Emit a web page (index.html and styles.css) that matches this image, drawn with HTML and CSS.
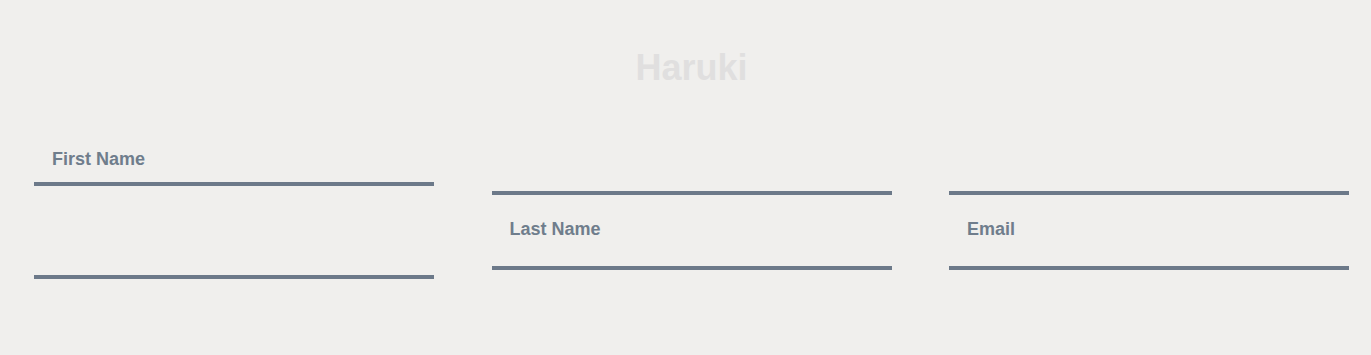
FILE: index.html
```html
<!DOCTYPE html>
<html lang="en">
<head>
<meta charset="utf-8">
<title>Haruki</title>
<link rel="stylesheet" href="styles.css">
</head>
<body>
<main class="page">
  <h1 class="title">Haruki</h1>
  <form class="fields">
    <div class="field field-above">
      <label class="label" for="first">First Name</label>
      <div class="box box-tall" id="first"></div>
    </div>
    <div class="field field-inside">
      <div class="box box-inner">
        <label class="label">Last Name</label>
      </div>
    </div>
    <div class="field field-inside">
      <div class="box box-inner">
        <label class="label">Email</label>
      </div>
    </div>
  </form>
</main>
</body>
</html>
```

FILE: styles.css
```css
html, body {
  margin: 0;
  padding: 0;
  background: #f0efed;
  font-family: "Liberation Sans", Arial, sans-serif;
}

.page {
  width: 1315px;
  margin-left: 34px;
}

.title {
  margin: 47px 0 0;
  font-size: 36px;
  line-height: 41px;
  font-weight: bold;
  color: #e0dfdf;
  text-align: center;
}

.fields {
  display: flex;
  align-items: flex-start;
  gap: 57.5px;
  margin-top: 61px;
}

.field {
  width: 400px;
  flex: none;
}

.label {
  display: block;
  padding-left: 18px;
  font-size: 18px;
  line-height: 21px;
  font-weight: bold;
  color: #6f7d8c;
}

.box {
  border-top: 4px solid #6c7989;
  border-bottom: 4px solid #6c7989;
}

.box-tall {
  margin-top: 12px;
  height: 89px;
}

.field-inside {
  margin-top: 42px;
}

.box-inner {
  padding: 24px 0 26px;
}
```
